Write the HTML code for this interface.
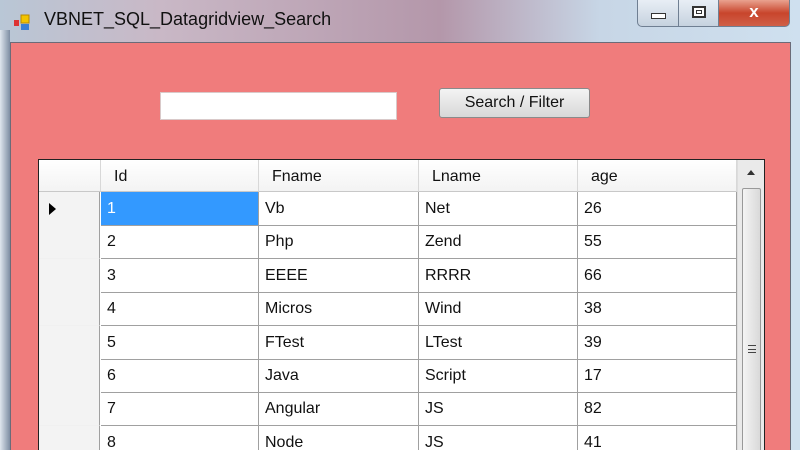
<!DOCTYPE html>
<html style="overflow:hidden;width:800px;height:450px"><head><style>
*{margin:0;padding:0;box-sizing:border-box}
body{width:800px;height:450px;overflow:hidden;position:relative;font-family:"Liberation Sans",sans-serif;background:linear-gradient(90deg,#b9c7d6 0%,#c9b8c6 20%,#b497aa 55%,#c7d6e6 75%,#cfe0ef 100%)}
.t{position:absolute;left:44px;top:9px;font-size:18px;color:#111}
.client{position:absolute;left:10px;top:42px;width:781px;height:408px;background:#f07c7c;border:1px solid #6b6b78;border-bottom:none}
.lf{position:absolute;left:0;top:30px;width:10px;height:420px;background:linear-gradient(90deg,#dfe6ee,#7d8ea3)}
.wb{position:absolute;top:0;height:27px;border:1px solid #6f7f92;border-top:none}
.tb{position:absolute;left:160px;top:92px;width:237px;height:28px;background:#fff;border:1px solid #d9c9c9}
.btn{position:absolute;left:439px;top:88px;width:151px;height:30px;border:1px solid #8a8a8a;border-radius:3px;background:linear-gradient(#f4f4f4,#e6e6e6 50%,#d8d8d8);font-size:16px;text-align:center;line-height:28px;color:#111}
.grid{position:absolute;left:38px;top:159px;width:727px;height:291px;background:#fff;border:1px solid #222;border-bottom:none;overflow:hidden}
.c{position:absolute;font-size:16px;color:#111;padding-left:6px;line-height:33px;border-right:1px solid #a0a0a0;border-bottom:1px solid #a0a0a0;height:34px}
.h{position:absolute;font-size:16px;color:#111;padding-left:13px;height:32px;line-height:34px;border-right:1px solid #d8d8d8;background:linear-gradient(#fff,#f3f3f3);border-bottom:1px solid #c8c8c8}
.rh{position:absolute;left:0;width:61px;height:34px;border-bottom:1px solid #f0f0f0;background:#f3f3f3;border-right:1px solid #a0a0a0}
.sb{position:absolute;left:698px;top:0;width:27px;height:300px;background:#eaeaea;border-left:1px solid #ddd}
</style></head><body>
<div class="lf"></div>
<svg style="position:absolute;left:12px;top:12px" width="20" height="20"><rect x="2" y="8" width="5" height="6" fill="#d33"/><rect x="9" y="3" width="8" height="8" fill="#f2c400" stroke="#b98a00"/><rect x="9" y="12" width="8" height="6" fill="#3a7fd5"/></svg>
<div class="t">VBNET_SQL_Datagridview_Search</div>
<div class="wb" style="left:637px;width:42px;background:linear-gradient(#e8eef5,#c6d2df);border-radius:0 0 0 5px"><div style="position:absolute;left:13px;top:13px;width:15px;height:6px;border:1px solid #333;background:#fff"></div></div>
<div class="wb" style="left:678px;width:41px;background:linear-gradient(#e8eef5,#c6d2df)"><div style="position:absolute;left:13px;top:6px;width:14px;height:12px;border:2px solid #333;background:#fff"><div style="margin:2px;height:4px;border:1px solid #333"></div></div></div>
<div class="wb" style="left:718px;width:72px;background:linear-gradient(#e9a28f,#c8452c 50%,#d06048);border-radius:0 0 5px 0;color:#fff;font-weight:bold;font-size:17px;text-align:center;line-height:24px">x</div>
<div class="client"></div>
<div class="tb"></div>
<div class="btn">Search / Filter</div>
<div class="grid">
<div class="h" style="left:0;top:0;width:62px;padding:0"></div>
<div class="h" style="left:62px;top:0;width:158px">Id</div>
<div class="h" style="left:220px;top:0;width:160px">Fname</div>
<div class="h" style="left:380px;top:0;width:159px">Lname</div>
<div class="h" style="left:539px;top:0;width:159px">age</div>
<div id="rows"></div>
<div class="sb"><div style="position:absolute;left:9px;top:10px;border:4px solid transparent;border-bottom:5px solid #333;border-top:none;width:0"></div>
<div style="position:absolute;left:4px;top:28px;width:19px;height:280px;border:1px solid #999;border-radius:2px;background:linear-gradient(90deg,#f4f4f4,#d9d9d9)"><div style="position:absolute;left:5px;top:156px;width:8px;height:8px;border-top:1px solid #444;border-bottom:1px solid #444"><div style="margin-top:3px;border-top:1px solid #444"></div></div></div></div>
</div>
<script>
var d=[["1","Vb","Net","26"],["2","Php","Zend","55"],["3","EEEE","RRRR","66"],["4","Micros","Wind","38"],["5","FTest","LTest","39"],["6","Java","Script","17"],["7","Angular","JS","82"],["8","Node","JS","41"]];
var x=[62,220,380,539],w=[158,160,159,159],h="";
d.forEach(function(r,i){var t=32+i*33.4;h+='<div class="rh" style="top:'+t+'px">'+(i==0?'<div style="position:absolute;left:10px;top:11px;border:6px solid transparent;border-left:7px solid #000;border-right:none"></div>':'')+'</div>';
r.forEach(function(v,j){h+='<div class="c" style="left:'+x[j]+'px;top:'+t+'px;width:'+w[j]+'px;'+(i==0&&j==0?'background:#3399ff;color:#fff;':'')+'">'+v+'</div>'})});
document.getElementById('rows').innerHTML=h;
</script>
</body></html>
